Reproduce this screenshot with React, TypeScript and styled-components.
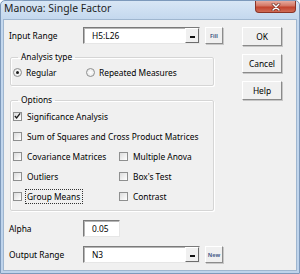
import React from 'react';
import styled, { createGlobalStyle } from 'styled-components';

const GlobalStyle = createGlobalStyle`
  html, body {
    margin: 0;
    padding: 0;
    background: #ffffff;
  }
  body {
    font-family: "Noto Sans", "Open Sans", sans-serif;
    font-size: 8.4px;
    color: #000;
  }
`;

const Window = styled.div`
  width: 300px;
  height: 274px;
  box-sizing: border-box;
  display: flex;
  flex-direction: column;
  background: linear-gradient(#d8e6f5, #c4d8ee 18px, #bed3eb);
  border: 1px solid #7d99bb;
  border-radius: 5px 5px 0 0;
  padding: 0 2px 2px 2px;
`;

const TitleBar = styled.div`
  height: 18px;
  display: flex;
  align-items: flex-start;
  justify-content: space-between;
`;

const Title = styled.span`
  font-size: 10.4px;
  color: #1e1e1e;
  padding: 1px 0 0 1px;
  line-height: 12px;
`;

const CloseButton = styled.div`
  width: 41px;
  height: 12px;
  margin-right: 1px;
  box-sizing: border-box;
  border: 1px solid #8a3427;
  border-top: none;
  border-radius: 0 0 4px 4px;
  background: linear-gradient(#e6ab9f, #d37562 45%, #c2432d 55%, #cf6b55);
  display: flex;
  align-items: center;
  justify-content: center;
`;

const Client = styled.div`
  flex: 1;
  display: flex;
  background: #f0f0f0;
  border: 1px solid #9fb6cf;
`;

const MainColumn = styled.div`
  width: 221px;
  box-sizing: border-box;
  padding-left: 5px;
  display: flex;
  flex-direction: column;
`;

const ButtonColumn = styled.div`
  display: flex;
  flex-direction: column;
  gap: 8px;
  padding: 7px 0 0 17px;
`;

const FieldRow = styled.div<{ $top: number }>`
  display: flex;
  align-items: center;
  margin-top: ${p => p.$top}px;
  height: 17px;
`;

const Label = styled.span`
  width: 74px;
  flex-shrink: 0;
`;

const TextBox = styled.div<{ $width: number }>`
  width: ${p => p.$width}px;
  height: 17px;
  box-sizing: border-box;
  display: flex;
  align-items: center;
  justify-content: space-between;
  background: #fff;
  border: 1px solid;
  border-color: #7a7a7a #e6e6e6 #e6e6e6 #7a7a7a;
  box-shadow: inset 1px 1px 0 #b5b5b5;
  padding-left: 8px;
`;

const RefButton = styled.div`
  width: 14px;
  height: 15px;
  box-sizing: border-box;
  background: #f0f0f0;
  border: 1px solid;
  border-color: #ffffff #6d6d6d #6d6d6d #ffffff;
  display: flex;
  align-items: flex-end;
  justify-content: center;
  padding-bottom: 4px;
  &::after {
    content: "";
    width: 5px;
    height: 2px;
    background: #111;
  }
`;

const SmallButton = styled.div`
  width: 18px;
  height: 17px;
  margin-left: 5px;
  box-sizing: border-box;
  background: #f0f0f0;
  border: 1px solid;
  border-color: #ffffff #8c8c8c #8c8c8c #ffffff;
  box-shadow: 1px 1px 0 #c8c8c8;
  display: flex;
  align-items: center;
  justify-content: center;
  font-size: 5.5px;
  font-weight: bold;
  color: #4a5f8a;
`;

const DialogButton = styled.div`
  width: 40px;
  height: 19px;
  box-sizing: border-box;
  background: #f0f0f0;
  border: 1px solid;
  border-color: #ffffff #8a8a8a #8a8a8a #ffffff;
  box-shadow: 1px 1px 0 #c6c6c6;
  display: flex;
  align-items: center;
  justify-content: center;
`;

const Group = styled.fieldset<{ $top: number }>`
  margin: ${p => p.$top}px 0 0 1px;
  width: 204px;
  box-sizing: border-box;
  padding: 0 0 4px 1px;
  border: 1px solid #d5d5d5;
  border-radius: 2px;
  box-shadow: inset 1px 1px 0 #ffffff, 1px 1px 0 #ffffff;
`;

const Legend = styled.legend`
  padding: 0 3px;
  margin-left: 6px;
  line-height: 12px;
`;

const RadioRow = styled.div`
  display: flex;
  align-items: center;
  height: 14px;
  margin-top: 2px;
  margin-bottom: 2px;
`;

const RadioOption = styled.label<{ $width?: number }>`
  display: flex;
  align-items: center;
  gap: 4px;
  width: ${p => (p.$width ? `${p.$width}px` : 'auto')};
  margin-left: 1px;
`;

const RadioCircle = styled.span<{ $checked?: boolean }>`
  width: 9px;
  height: 9px;
  box-sizing: border-box;
  border-radius: 50%;
  border: 1px solid #8e8f8f;
  background: radial-gradient(circle, #fff, #e2e2e2);
  display: flex;
  align-items: center;
  justify-content: center;
  &::after {
    content: "";
    display: ${p => (p.$checked ? 'block' : 'none')};
    width: 3px;
    height: 3px;
    border-radius: 50%;
    background: #1b1b1b;
  }
`;

const OptionGrid = styled.div`
  display: grid;
  grid-template-columns: 106px 1fr;
  grid-auto-rows: 20px;
`;

const CheckOption = styled.label<{ $span?: boolean }>`
  display: flex;
  align-items: center;
  gap: 4px;
  grid-column: ${p => (p.$span ? '1 / -1' : 'auto')};
  margin-left: 1px;
`;

const CheckBox = styled.span`
  width: 9px;
  height: 9px;
  box-sizing: border-box;
  border: 1px solid #8e8f8f;
  background: linear-gradient(135deg, #dcdcdc, #ffffff);
  display: flex;
  align-items: center;
  justify-content: center;
  flex-shrink: 0;
`;

const CheckText = styled.span<{ $focused?: boolean }>`
  padding: 1px 2px 1px 1px;
  margin-left: -1px;
  border: 1px dotted ${p => (p.$focused ? '#333' : 'transparent')};
`;

const Check = () => (
  <svg width="8" height="8" viewBox="0 0 8 8">
    <path d="M1 4 L3 6.2 L7 1" fill="none" stroke="#1a1a1a" strokeWidth="1.5" />
  </svg>
);

const Checkbox = (props: { label: string; checked?: boolean; span?: boolean; focused?: boolean }) => (
  <CheckOption $span={props.span}>
    <CheckBox>{props.checked && <Check />}</CheckBox>
    <CheckText $focused={props.focused}>{props.label}</CheckText>
  </CheckOption>
);

export default function App() {
  return (
    <>
      <GlobalStyle />
      <Window>
        <TitleBar>
          <Title>Manova: Single Factor</Title>
          <CloseButton>
            <svg width="10" height="8" viewBox="0 0 10 8">
              <path d="M2 1 L8 7 M8 1 L2 7" stroke="#5a1a10" strokeWidth="2.6" strokeLinecap="round" />
              <path d="M2 1 L8 7 M8 1 L2 7" stroke="#ffffff" strokeWidth="1.5" strokeLinecap="round" />
            </svg>
          </CloseButton>
        </TitleBar>
        <Client>
          <MainColumn>
            <FieldRow $top={7}>
              <Label>Input Range</Label>
              <TextBox $width={117}>
                H5:L26
                <RefButton />
              </TextBox>
              <SmallButton>Fill</SmallButton>
            </FieldRow>

            <Group $top={7}>
              <Legend>Analysis type</Legend>
              <RadioRow>
                <RadioOption $width={72}>
                  <RadioCircle $checked />
                  Regular
                </RadioOption>
                <RadioOption>
                  <RadioCircle />
                  Repeated Measures
                </RadioOption>
              </RadioRow>
            </Group>

            <Group $top={8}>
              <Legend>Options</Legend>
              <OptionGrid>
                <Checkbox label="Significance Analysis" checked span />
                <Checkbox label="Sum of Squares and Cross Product Matrices" span />
                <Checkbox label="Covariance Matrices" />
                <Checkbox label="Multiple Anova" />
                <Checkbox label="Outliers" />
                <Checkbox label="Box's Test" />
                <Checkbox label="Group Means" focused />
                <Checkbox label="Contrast" />
              </OptionGrid>
            </Group>

            <FieldRow $top={9}>
              <Label>Alpha</Label>
              <TextBox $width={37}>0.05</TextBox>
            </FieldRow>

            <FieldRow $top={9}>
              <Label>Output Range</Label>
              <TextBox $width={117}>
                N3
                <RefButton />
              </TextBox>
              <SmallButton>New</SmallButton>
            </FieldRow>
          </MainColumn>

          <ButtonColumn>
            <DialogButton>OK</DialogButton>
            <DialogButton>Cancel</DialogButton>
            <DialogButton>Help</DialogButton>
          </ButtonColumn>
        </Client>
      </Window>
    </>
  );
}
